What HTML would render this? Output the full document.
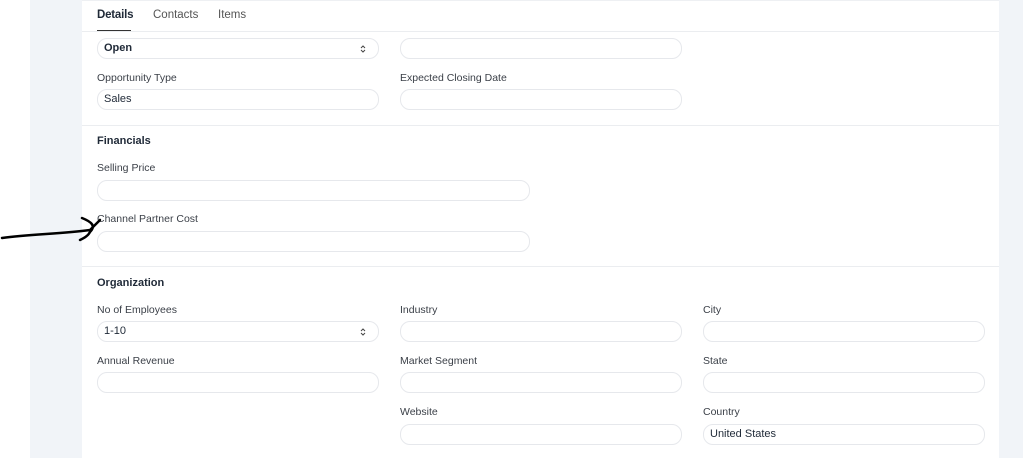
<!DOCTYPE html>
<html><head><style>
body{margin:0;width:1023px;height:458px;background:#fff;font-family:"Liberation Sans",sans-serif;position:relative;overflow:hidden;color:#1f2937}
.g{position:absolute;background:#f1f4f8}
.t{position:absolute;font-size:10.5px;color:#3a3f47}
.in{position:absolute;height:21px;border:1px solid #e6e8ec;border-radius:10px;background:#fff;box-sizing:border-box;font-size:11px;color:#1f2937;padding-left:6px;line-height:19px}
.hr{position:absolute;left:82px;width:917px;height:1px;background:#ebedf0}
.h{position:absolute;font-size:11px;font-weight:bold;color:#1f2937}
.ar{position:absolute;right:12px;top:5px}
</style></head><body>
<div class="g" style="left:30px;top:0;width:52px;height:458px"></div>
<div class="g" style="left:999px;top:0;width:24px;height:458px"></div>
<div class="g" style="left:82px;top:0;width:917px;height:1px;background:#eef0f3"></div>
<div class="t" style="left:97px;top:9px;color:#1f2937;font-size:11.5px;font-weight:bold;letter-spacing:-0.2px">Details</div>
<div class="t" style="left:153px;top:9px;color:#555;font-size:11.5px">Contacts</div>
<div class="t" style="left:218px;top:9px;color:#555;font-size:11.5px">Items</div>
<div class="hr" style="top:31px"></div>
<div style="position:absolute;left:97px;top:30px;width:34px;height:1px;background:#333"></div>
<div class="in" style="left:97px;top:38px;width:282px;font-weight:bold">Open<svg class="ar" width="6" height="10"><path d="M1 4 L3 2 L5 4 M1 6 L3 8 L5 6" stroke="#444" fill="none" stroke-width="1"/></svg></div>
<div class="in" style="left:400px;top:38px;width:282px"></div>
<div class="t" style="left:97px;top:72px">Opportunity Type</div>
<div class="t" style="left:400px;top:72px">Expected Closing Date</div>
<div class="in" style="left:97px;top:89px;width:282px">Sales</div>
<div class="in" style="left:400px;top:89px;width:282px"></div>
<div class="hr" style="top:125px"></div>
<div class="h" style="left:97px;top:135px">Financials</div>
<div class="t" style="left:97px;top:162px">Selling Price</div>
<div class="in" style="left:97px;top:180px;width:433px"></div>
<div class="t" style="left:97px;top:213px">Channel Partner Cost</div>
<div class="in" style="left:97px;top:231px;width:433px"></div>
<div class="hr" style="top:266px"></div>
<div class="h" style="left:97px;top:277px">Organization</div>
<div class="t" style="left:97px;top:304px">No of Employees</div>
<div class="t" style="left:400px;top:304px">Industry</div>
<div class="t" style="left:703px;top:304px">City</div>
<div class="in" style="left:97px;top:321px;width:282px">1-10<svg class="ar" width="6" height="10"><path d="M1 4 L3 2 L5 4 M1 6 L3 8 L5 6" stroke="#444" fill="none" stroke-width="1"/></svg></div>
<div class="in" style="left:400px;top:321px;width:282px"></div>
<div class="in" style="left:703px;top:321px;width:282px"></div>
<div class="t" style="left:97px;top:355px">Annual Revenue</div>
<div class="t" style="left:400px;top:355px">Market Segment</div>
<div class="t" style="left:703px;top:355px">State</div>
<div class="in" style="left:97px;top:372px;width:282px"></div>
<div class="in" style="left:400px;top:372px;width:282px"></div>
<div class="in" style="left:703px;top:372px;width:282px"></div>
<div class="t" style="left:400px;top:406px">Website</div>
<div class="t" style="left:703px;top:406px">Country</div>
<div class="in" style="left:400px;top:424px;width:282px"></div>
<div class="in" style="left:703px;top:424px;width:282px">United States</div>
<svg style="position:absolute;left:0;top:210px" width="110" height="40"><path d="M2 28 C30 24,60 24,90 20 M82 8 C92 12,96 16,90 22 C88 26,84 28,80 30 M90 20 L100 10" stroke="#000" stroke-width="2.5" fill="none" stroke-linecap="round"/></svg>
</body></html>
